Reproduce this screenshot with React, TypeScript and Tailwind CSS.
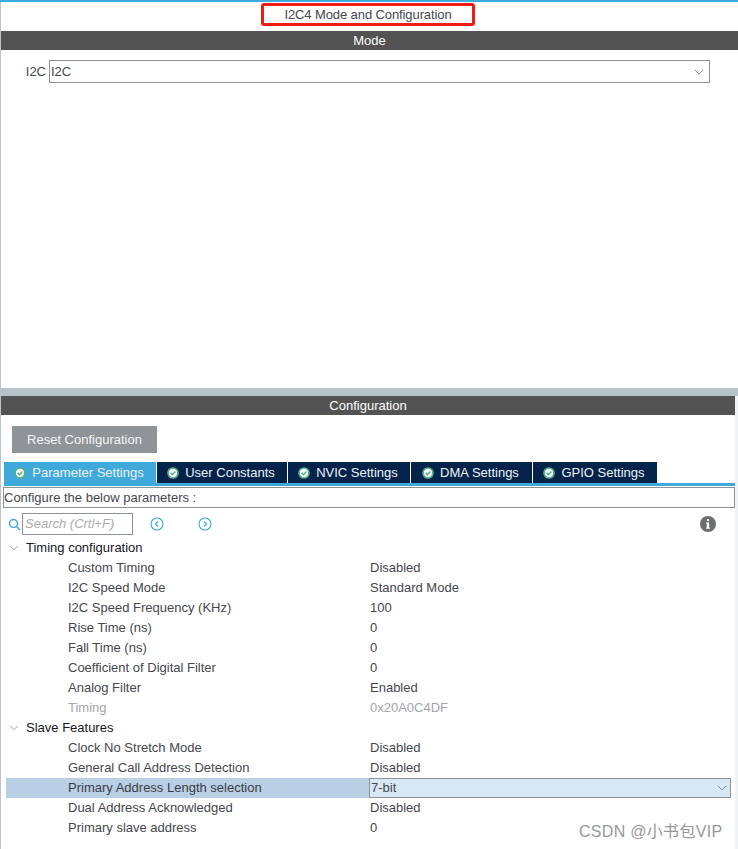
import { ChevronDown } from "lucide-react";

const tabs = [
  { label: "Parameter Settings", width: "w-[152px]", active: true },
  { label: "User Constants", width: "w-[130px]", active: false },
  { label: "NVIC Settings", width: "w-[122px]", active: false },
  { label: "DMA Settings", width: "w-[121px]", active: false },
  { label: "GPIO Settings", width: "w-[124px]", active: false },
];

const timingRows = [
  { name: "Custom Timing", value: "Disabled" },
  { name: "I2C Speed Mode", value: "Standard Mode" },
  { name: "I2C Speed Frequency (KHz)", value: "100" },
  { name: "Rise Time (ns)", value: "0" },
  { name: "Fall Time (ns)", value: "0" },
  { name: "Coefficient of Digital Filter", value: "0" },
  { name: "Analog Filter", value: "Enabled" },
  { name: "Timing", value: "0x20A0C4DF", muted: true },
];

const slaveRows = [
  { name: "Clock No Stretch Mode", value: "Disabled" },
  { name: "General Call Address Detection", value: "Disabled" },
  { name: "Primary Address Length selection", value: "7-bit", selected: true },
  { name: "Dual Address Acknowledged", value: "Disabled" },
  { name: "Primary slave address", value: "0" },
];

type Row = { name: string; value: string; muted?: boolean; selected?: boolean };

function CheckIcon() {
  return (
    <svg width="12" height="12" viewBox="0 0 12 12" className="shrink-0">
      <circle cx="6" cy="6" r="5" fill="#ffffff" stroke="#4fb286" strokeWidth="1.7" />
      <path d="M3.6 5.9 L5.4 7.7 L8.4 4.5" fill="none" stroke="#4fb286" strokeWidth="1.5" />
    </svg>
  );
}

function ParamRow({ row }: { row: Row }) {
  if (row.selected) {
    return (
      <div className="flex h-5 items-center bg-[#b8cfe6] ml-[5px] mr-[7px]">
        <div className="w-[363px] pl-[62px] shrink-0 text-[#3c3c44]">{row.name}</div>
        <div className="flex h-[20px] flex-1 items-center justify-between border border-[#8c9398] bg-[#d8e8f6] pl-[1px] mr-[-3px]">
          <span>{row.value}</span>
          <ChevronDown size={16} strokeWidth={1} className="text-[#5a6068]" />
        </div>
      </div>
    );
  }
  const color = row.muted ? "text-[#a3a6aa]" : "text-[#45474d]";
  return (
    <div className={`flex h-5 items-center ${color}`}>
      <div className="w-[368px] pl-[67px] shrink-0">{row.name}</div>
      <div className="pl-[1px]">{row.value}</div>
    </div>
  );
}

function GroupHeader({ title }: { title: string }) {
  return (
    <div className="flex h-5 items-center pl-[6px] text-[#16181d]">
      <ChevronDown size={14} strokeWidth={1} className="mr-[5px] text-[#5a6068]" />
      <span>{title}</span>
    </div>
  );
}

export default function App() {
  return (
    <div className="relative h-[849px] w-[738px] overflow-hidden bg-white text-[13px] text-[#45474d] font-['Liberation_Sans',Arial,sans-serif]">
      <div className="h-[2px] bg-[#3fa9dc]" />
      <div className="flex h-[386px] flex-col border-l border-[#b9c4cc]">
        <div className="flex h-[29px] items-start pl-[260px] pt-[1px]">
          <div className="flex h-[23px] w-[214px] items-center justify-center rounded-[3px] border-[3px] border-[#f01c14] tracking-[-0.1px]">
            I2C4 Mode and Configuration
          </div>
        </div>
        <div className="flex h-[19px] items-center justify-center bg-[#525352] text-white">Mode</div>
        <div className="flex items-center pt-[10px]">
          <span className="w-[48px] pr-[3px] text-right">I2C</span>
          <div className="flex h-[23px] w-[661px] items-center justify-between border border-[#8c9398] pl-[1px] pr-[2px]">
            <span>I2C</span>
            <ChevronDown size={16} strokeWidth={1} className="text-[#5a6068]" />
          </div>
        </div>
      </div>
      <div className="h-[8px] bg-[#b7c3ca]" />
      <div className="flex h-[453px] flex-col border-l border-[#b9c4cc] border-r-[3px] border-r-[#f2f3f4]">
        <div className="flex h-[19px] items-center justify-center bg-[#525352] text-white">Configuration</div>
        <div className="pl-[11px] pt-[11px]">
          <div className="flex h-[27px] w-[145px] items-center justify-center bg-[#8f9499] text-[#f4f5f5]">
            Reset Configuration
          </div>
        </div>
        <div className="flex gap-[1px] pl-[3px] pt-[9px]">
          {tabs.map((tab) => (
            <div
              key={tab.label}
              className={`flex h-[21px] items-center justify-center gap-[6px] pr-[2px] text-[#eef2f5] ${tab.width} ${tab.active ? "bg-[#3fa9dc]" : "bg-[#03234b]"}`}
            >
              <CheckIcon />
              <span>{tab.label}</span>
            </div>
          ))}
        </div>
        <div className="ml-[3px] h-[3px] bg-[#3fa9dc]" />
        <div className="ml-[2px] mt-[1px] flex h-[21px] items-center border border-[#8c9398]">
          Configure the below parameters :
        </div>
        <div className="flex h-[28px] items-center pl-[7px] pt-[4px]">
          <svg width="13" height="13" viewBox="0 0 13 13" className="mr-[1px] shrink-0">
            <circle cx="5.5" cy="5.5" r="4" fill="none" stroke="#3fa9dc" strokeWidth="1.5" />
            <path d="M8.5 8.5 L12 12" stroke="#3fa9dc" strokeWidth="1.6" />
          </svg>
          <div className="flex h-[22px] w-[111px] items-center border border-[#8c9398] pl-[2px] italic text-[#a9abae]">
            Search (Crtl+F)
          </div>
          <svg width="14" height="14" viewBox="0 0 14 14" className="ml-[17px] shrink-0">
            <circle cx="7" cy="7" r="6" fill="none" stroke="#3fa9dc" strokeWidth="1.1" />
            <path d="M8 4.5 L5.5 7 L8 9.5" fill="none" stroke="#3fa9dc" strokeWidth="1.2" />
          </svg>
          <svg width="14" height="14" viewBox="0 0 14 14" className="ml-[34px] shrink-0">
            <circle cx="7" cy="7" r="6" fill="none" stroke="#3fa9dc" strokeWidth="1.1" />
            <path d="M6 4.5 L8.5 7 L6 9.5" fill="none" stroke="#3fa9dc" strokeWidth="1.2" />
          </svg>
          <svg width="16" height="16" viewBox="0 0 16 16" className="ml-[488px] shrink-0">
            <circle cx="8" cy="8" r="8" fill="#6b6d70" />
            <rect x="6.9" y="3" width="2.2" height="2.2" fill="#fff" />
            <path d="M6 6.6 H9.1 V11.6 H10 V12.8 H6 V11.6 H6.9 V7.8 H6 Z" fill="#fff" />
          </svg>
        </div>
        <div className="pt-[2px]">
          <GroupHeader title="Timing configuration" />
          {timingRows.map((row) => (
            <ParamRow key={row.name} row={row} />
          ))}
          <GroupHeader title="Slave Features" />
          {slaveRows.map((row) => (
            <ParamRow key={row.name} row={row} />
          ))}
        </div>
      </div>
      {/* watermark sits over the page */}
      <div className="absolute left-[579px] top-[820px] text-[16px] tracking-[0.3px] text-[#96999c] font-['Liberation_Sans','Noto_Sans_CJK_SC',sans-serif]">
        CSDN @小书包VIP
      </div>
    </div>
  );
}
